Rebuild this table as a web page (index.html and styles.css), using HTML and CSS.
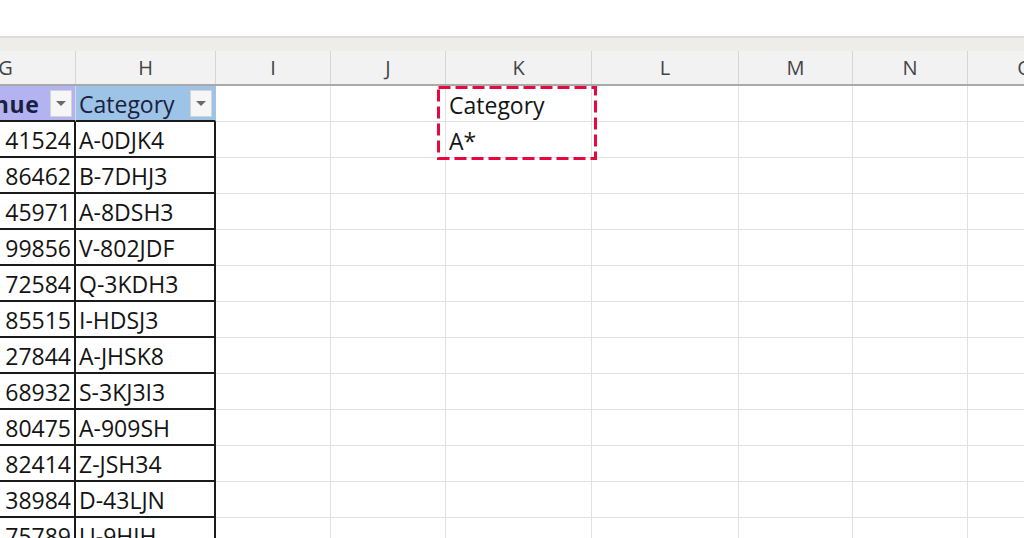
FILE: index.html
```html
<!DOCTYPE html>
<html>
<head>
<meta charset="utf-8">
<link rel="stylesheet" href="styles.css">
</head>
<body>
<div class="app">
  <div class="topwhite"></div>
  <div class="strip"></div>
  <div class="cols">
    <div class="ch">G</div><div class="ch">H</div><div class="ch">I</div><div class="ch">J</div><div class="ch">K</div><div class="ch">L</div><div class="ch">M</div><div class="ch">N</div><div class="ch">O</div>
  </div>
  <div class="sheet">
    <div class="row">
      <div class="c th th-g"><span class="tht bold">Revenue</span><span class="fb"><i class="tri"></i></span></div>
      <div class="c th th-h"><span class="tht">Category</span><span class="fb"><i class="tri"></i></span></div>
      <div class="c"></div><div class="c"></div><div class="c txt">Category</div><div class="c"></div><div class="c"></div><div class="c"></div><div class="c"></div>
    </div>
    <div class="row">
      <div class="c td num">41524</div><div class="c td txt">A-0DJK4</div>
      <div class="c"></div><div class="c"></div><div class="c txt">A*</div><div class="c"></div><div class="c"></div><div class="c"></div><div class="c"></div>
    </div>
    <div class="row">
      <div class="c td num">86462</div><div class="c td txt">B-7DHJ3</div>
      <div class="c"></div><div class="c"></div><div class="c"></div><div class="c"></div><div class="c"></div><div class="c"></div><div class="c"></div>
    </div>
    <div class="row">
      <div class="c td num">45971</div><div class="c td txt">A-8DSH3</div>
      <div class="c"></div><div class="c"></div><div class="c"></div><div class="c"></div><div class="c"></div><div class="c"></div><div class="c"></div>
    </div>
    <div class="row">
      <div class="c td num">99856</div><div class="c td txt">V-802JDF</div>
      <div class="c"></div><div class="c"></div><div class="c"></div><div class="c"></div><div class="c"></div><div class="c"></div><div class="c"></div>
    </div>
    <div class="row">
      <div class="c td num">72584</div><div class="c td txt">Q-3KDH3</div>
      <div class="c"></div><div class="c"></div><div class="c"></div><div class="c"></div><div class="c"></div><div class="c"></div><div class="c"></div>
    </div>
    <div class="row">
      <div class="c td num">85515</div><div class="c td txt">I-HDSJ3</div>
      <div class="c"></div><div class="c"></div><div class="c"></div><div class="c"></div><div class="c"></div><div class="c"></div><div class="c"></div>
    </div>
    <div class="row">
      <div class="c td num">27844</div><div class="c td txt">A-JHSK8</div>
      <div class="c"></div><div class="c"></div><div class="c"></div><div class="c"></div><div class="c"></div><div class="c"></div><div class="c"></div>
    </div>
    <div class="row">
      <div class="c td num">68932</div><div class="c td txt">S-3KJ3I3</div>
      <div class="c"></div><div class="c"></div><div class="c"></div><div class="c"></div><div class="c"></div><div class="c"></div><div class="c"></div>
    </div>
    <div class="row">
      <div class="c td num">80475</div><div class="c td txt">A-909SH</div>
      <div class="c"></div><div class="c"></div><div class="c"></div><div class="c"></div><div class="c"></div><div class="c"></div><div class="c"></div>
    </div>
    <div class="row">
      <div class="c td num">82414</div><div class="c td txt">Z-JSH34</div>
      <div class="c"></div><div class="c"></div><div class="c"></div><div class="c"></div><div class="c"></div><div class="c"></div><div class="c"></div>
    </div>
    <div class="row">
      <div class="c td num">38984</div><div class="c td txt">D-43LJN</div>
      <div class="c"></div><div class="c"></div><div class="c"></div><div class="c"></div><div class="c"></div><div class="c"></div><div class="c"></div>
    </div>
    <div class="row">
      <div class="c td num">75789</div><div class="c td txt">U-9HJH</div>
      <div class="c"></div><div class="c"></div><div class="c"></div><div class="c"></div><div class="c"></div><div class="c"></div><div class="c"></div>
    </div>
    <svg class="marquee" width="160" height="74" viewBox="0 0 160 74">
      <rect x="1.5" y="1.5" width="157" height="71" fill="none" stroke="#e5093f" stroke-width="3" stroke-dasharray="12 5"/>
    </svg>
  </div>
</div>
</body>
</html>
```
FILE: styles.css
```css
html, body {
  margin: 0;
  padding: 0;
  background: #ffffff;
  overflow: hidden;
  width: 1024px;
  height: 538px;
}
.app {
  width: 1024px;
  height: 538px;
  overflow: hidden;
  font-family: "Open Sans", "Liberation Sans", sans-serif;
}
.topwhite {
  height: 36px;
  background: #ffffff;
}
.strip {
  height: 13px;
  border-top: 2px solid #dedcd8;
  background: #efede9;
}
.cols, .row {
  display: grid;
  grid-template-columns: 140px 140px 115px 115px 146px 147px 114px 115px 115px;
  margin-left: -64px;
}
.cols {
  height: 33px;
  background: #f2f2f2;
  border-bottom: 2px solid #a9a9a9;
}
.ch {
  display: flex;
  align-items: center;
  justify-content: center;
  font-size: 20px;
  color: #444444;
  border-right: 1px solid #d6d6d6;
}
.sheet {
  position: relative;
}
.row {
  height: 36px;
}
.c {
  box-sizing: border-box;
  height: 36px;
  padding-top: 2px;
  border-right: 1px solid #e1e1e1;
  border-bottom: 1px solid #e1e1e1;
  display: flex;
  align-items: center;
  font-size: 23px;
  color: #141414;
  white-space: nowrap;
  overflow: hidden;
}
.txt {
  padding-left: 3px;
}
.num {
  justify-content: flex-end;
  padding-right: 3px;
}
.td {
  border-right: 2px solid #1a1a1a;
  border-bottom: 2px solid #1a1a1a;
  background: #ffffff;
}
.th {
  justify-content: space-between;
  padding-top: 0;
  padding-left: 3px;
  padding-right: 3px;
  border-bottom: 2px solid #1a1a1a;
  color: #1a2140;
}
.th .tht {
  padding-top: 2px;
}
.th-g {
  background: #b3b3f2;
  border-right: 1px solid #d8d8f6;
  padding-left: 0;
}
.th-g .tht {
  letter-spacing: 0.6px;
}
.th-h {
  background: #9dc3e6;
  border-right: 1px solid #9dc3e6;
}
.tht.bold {
  font-weight: 700;
}
.fb {
  flex: none;
  box-sizing: border-box;
  width: 22px;
  height: 27px;
  background: #f6f6f6;
  border: 1px solid #d4d4d4;
  display: flex;
  align-items: center;
  justify-content: center;
}
.tri {
  width: 0;
  height: 0;
  border-left: 5px solid transparent;
  border-right: 5px solid transparent;
  border-top: 5px solid #6a6a6a;
}
.marquee {
  position: absolute;
  left: 437px;
  top: 0;
}
```
